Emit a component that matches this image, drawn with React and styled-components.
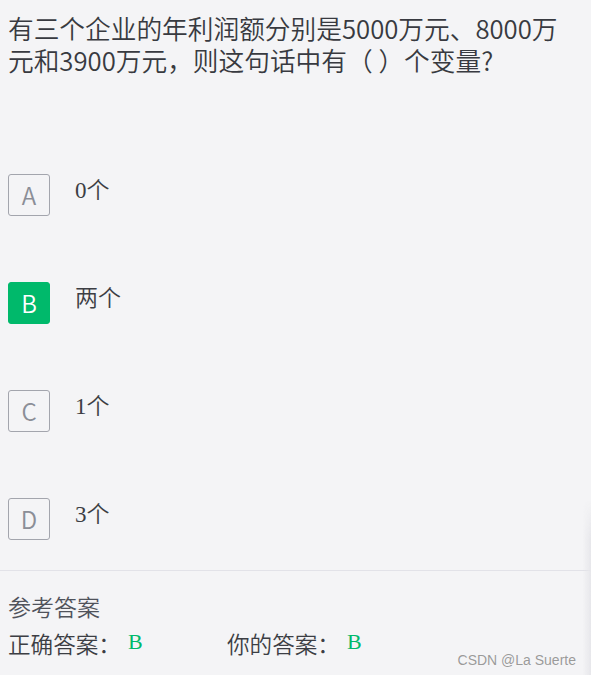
import React from "react";
import styled, { createGlobalStyle } from "styled-components";

const GlobalStyle = createGlobalStyle`
  html, body {
    margin: 0;
    padding: 0;
    background: #f4f4f6;
  }
  body {
    font-family: "Noto Sans CJK SC", "Noto Sans", sans-serif;
  }
`;

const Page = styled.div`
  position: relative;
  width: 591px;
  height: 675px;
  overflow: hidden;
  background: #f4f4f6;
  box-sizing: border-box;
  padding-top: 12px;
`;

const Question = styled.div`
  padding: 0 22px 0 8px;
  font-size: 25.7px;
  font-weight: 350;
  line-height: 32px;
  color: #383a40;
`;

const Options = styled.div`
  display: flex;
  flex-direction: column;
  gap: 66px;
  padding: 98px 8px 0;
`;

const Option = styled.div`
  display: flex;
  align-items: center;
  height: 42px;
`;

const Badge = styled.div`
  box-sizing: border-box;
  width: 42px;
  height: 42px;
  flex: none;
  border-radius: 3px;
  display: flex;
  align-items: center;
  justify-content: center;
  font-family: "Noto Sans CJK SC", "Noto Sans", sans-serif;
  font-size: 24px;
  font-weight: 350;
  line-height: 1;
  border: 1px solid ${(p) => (p.$selected ? "#00b96b" : "#a3a5ad")};
  background: ${(p) => (p.$selected ? "#00b96b" : "transparent")};
  color: ${(p) => (p.$selected ? "#ffffff" : "#8b8e97")};
`;

const OptionText = styled.div`
  margin-left: 25px;
  padding-bottom: 9px;
  font-family: "Liberation Serif", "Noto Sans CJK SC", serif;
  font-size: 23px;
  font-weight: 350;
  line-height: 30px;
  color: #3c3e44;
`;

const Divider = styled.div`
  margin-top: 30px;
  height: 1px;
  background: #e2e2e8;
`;

const Answers = styled.div`
  padding: 20px 8px 0;
`;

const AnswerTitle = styled.div`
  font-size: 23px;
  font-weight: 350;
  line-height: 30px;
  color: #50535b;
`;

const AnswerRow = styled.div`
  display: flex;
  margin-top: 8px;
  line-height: 30px;
`;

const AnswerItem = styled.div`
  display: flex;
  align-items: flex-start;
  width: ${(p) => p.$width || "auto"};
`;

const AnswerLabel = styled.span`
  font-size: 22.6px;
  font-weight: 350;
  color: #3c3e44;
`;

const AnswerValue = styled.span`
  font-family: "Liberation Serif", serif;
  font-size: 22px;
  line-height: 22px;
  color: #00b96b;
  margin-left: 7px;
  padding-top: 2px;
`;

const Watermark = styled.div`
  position: absolute;
  right: 15px;
  bottom: 7px;
  font-family: "Liberation Sans", Arial, sans-serif;
  font-size: 14px;
  color: #9a9a9a;
  text-shadow: 0 0 1px #ffffff;
`;

const EdgeShade = styled.div`
  position: absolute;
  right: 0;
  top: 500px;
  bottom: 0;
  width: 8px;
  background: linear-gradient(to right, rgba(244, 244, 246, 0), rgba(230, 230, 234, 1));
  -webkit-mask-image: linear-gradient(to bottom, transparent, #000 40px);
  mask-image: linear-gradient(to bottom, transparent, #000 40px);
`;

const options = [
  { key: "A", text: "0个" },
  { key: "B", text: "两个", selected: true },
  { key: "C", text: "1个" },
  { key: "D", text: "3个" },
];

export default function App() {
  return (
    <>
      <GlobalStyle />
      <Page>
        <Question>
          有三个企业的年利润额分别是5000万元、8000万元和3900万元，则这句话中有（ ）个变量?
        </Question>
        <Options>
          {options.map((o) => (
            <Option key={o.key}>
              <Badge $selected={o.selected}>{o.key}</Badge>
              <OptionText>{o.text}</OptionText>
            </Option>
          ))}
        </Options>
        <Divider />
        <Answers>
          <AnswerTitle>参考答案</AnswerTitle>
          <AnswerRow>
            <AnswerItem $width="219px">
              <AnswerLabel>正确答案：</AnswerLabel>
              <AnswerValue>B</AnswerValue>
            </AnswerItem>
            <AnswerItem>
              <AnswerLabel>你的答案：</AnswerLabel>
              <AnswerValue>B</AnswerValue>
            </AnswerItem>
          </AnswerRow>
        </Answers>
        <EdgeShade />
        <Watermark>CSDN @La Suerte</Watermark>
      </Page>
    </>
  );
}
